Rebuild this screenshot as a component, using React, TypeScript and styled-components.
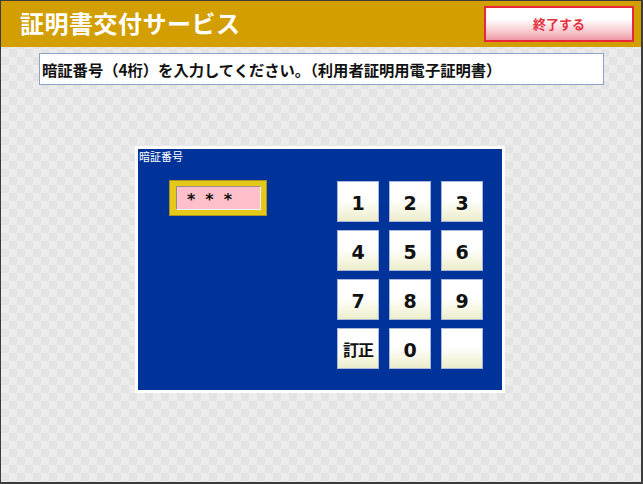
import React from "react";
import styled, { createGlobalStyle } from "styled-components";

const Global = createGlobalStyle`
  html, body { margin: 0; padding: 0; }
  body { font-family: "Noto Sans CJK JP", "Noto Sans", sans-serif; }
  * { box-sizing: border-box; }
`;

const Frame = styled.div`
  width: 643px;
  height: 484px;
  border-style: solid;
  border-color: #3c3c3c;
  border-width: 1px 2px 2px 1px;
  background-color: #ececec;
  background-image: conic-gradient(#e3e3e3 25%, transparent 0 50%, #e3e3e3 0 75%, transparent 0);
  background-size: 16px 16px;
  display: flex;
  flex-direction: column;
  overflow: hidden;
`;

const Header = styled.header`
  height: 46px;
  background: #d39f00;
  display: flex;
  align-items: center;
  justify-content: space-between;
  padding: 0 7px 0 19px;
`;

const Title = styled.h1`
  margin: 0;
  color: #ffffff;
  font-family: "Noto Sans CJK JP", sans-serif;
  font-weight: 700;
  font-size: 24px;
  letter-spacing: 0.5px;
  line-height: 1;
  margin-top: -2px;
`;

const ExitButton = styled.button`
  width: 150px;
  height: 36px;
  border: 2px solid #e8283a;
  background: linear-gradient(to bottom, #ffffff 0%, #ffffff 35%, #f6c6cc 75%, #ee9aa6 100%);
  color: #e5303e;
  font-family: "Noto Sans CJK JP", sans-serif;
  font-weight: 700;
  font-size: 13px;
  padding: 0;
  margin-top: -1px;
`;

const Instruction = styled.div`
  margin: 6px 0 0 38px;
  width: 565px;
  height: 32px;
  background: #ffffff;
  border: 1px solid #8ea2c8;
  display: flex;
  align-items: center;
  padding-left: 2px;
  font-family: "Noto Sans CJK JP", sans-serif;
  font-weight: 700;
  font-size: 15.3px;
  color: #111;
`;

const Panel = styled.section`
  margin: 61px 0 0 134px;
  width: 370px;
  height: 247px;
  border: 3px solid #ffffff;
  background: #003399;
  display: flex;
  flex-direction: column;
`;

const PanelLabel = styled.div`
  color: #ffffff;
  font-family: "Noto Sans CJK JP", sans-serif;
  font-size: 11px;
  line-height: 15px;
  padding-left: 1px;
`;

const PanelBody = styled.div`
  display: flex;
  align-items: flex-start;
  padding: 16px 0 0 31px;
`;

const PinFrame = styled.div`
  width: 98px;
  height: 36px;
  background: #e4c918;
  border: 1px solid #a89322;
  padding: 5px 5px 5px 6px;
`;

const PinField = styled.div`
  width: 100%;
  height: 100%;
  background: #ffc0cb;
  border: 1px solid;
  border-color: #9a8c8c #f4f4f4 #f4f4f4 #9a8c8c;
  display: flex;
  align-items: center;
  padding-left: 10px;
  font-family: "DejaVu Sans", sans-serif;
  font-weight: 700;
  font-size: 16px;
  letter-spacing: 10px;
  color: #111;
  padding-top: 3px;
`;

const Keypad = styled.div`
  margin: 1px 0 0 70px;
  display: grid;
  grid-template-columns: repeat(3, 42px);
  grid-auto-rows: 41px;
  column-gap: 10px;
  row-gap: 8px;
`;

const Key = styled.button<{ $small?: boolean }>`
  border: 1px solid #a9b6d8;
  background: linear-gradient(to bottom, #ffffff 0%, #ffffff 45%, #f6f6e2 75%, #ececcc 100%);
  padding: ${(p) => (p.$small ? "0" : "3px 0 0 0")};
  font-family: ${(p) => (p.$small ? '"Noto Sans CJK JP", sans-serif' : '"DejaVu Sans", sans-serif')};
  font-weight: 700;
  font-size: ${(p) => (p.$small ? "16px" : "19px")};
  letter-spacing: ${(p) => (p.$small ? "-1px" : "0")};
  color: #111;
  display: flex;
  align-items: center;
  justify-content: center;
  white-space: nowrap;
`;

const keys: { label: string; small?: boolean }[] = [
  { label: "1" }, { label: "2" }, { label: "3" },
  { label: "4" }, { label: "5" }, { label: "6" },
  { label: "7" }, { label: "8" }, { label: "9" },
  { label: "訂正", small: true }, { label: "0" }, { label: "" },
];

export default function App() {
  return (
    <>
      <Global />
      <Frame>
        <Header>
          <Title>証明書交付サービス</Title>
          <ExitButton>終了する</ExitButton>
        </Header>
        <Instruction>暗証番号（4桁）を入力してください。（利用者証明用電子証明書）</Instruction>
        <Panel>
          <PanelLabel>暗証番号</PanelLabel>
          <PanelBody>
            <PinFrame>
              <PinField>***</PinField>
            </PinFrame>
            <Keypad>
              {keys.map((k, i) => (
                <Key key={i} $small={k.small}>{k.label}</Key>
              ))}
            </Keypad>
          </PanelBody>
        </Panel>
      </Frame>
    </>
  );
}
